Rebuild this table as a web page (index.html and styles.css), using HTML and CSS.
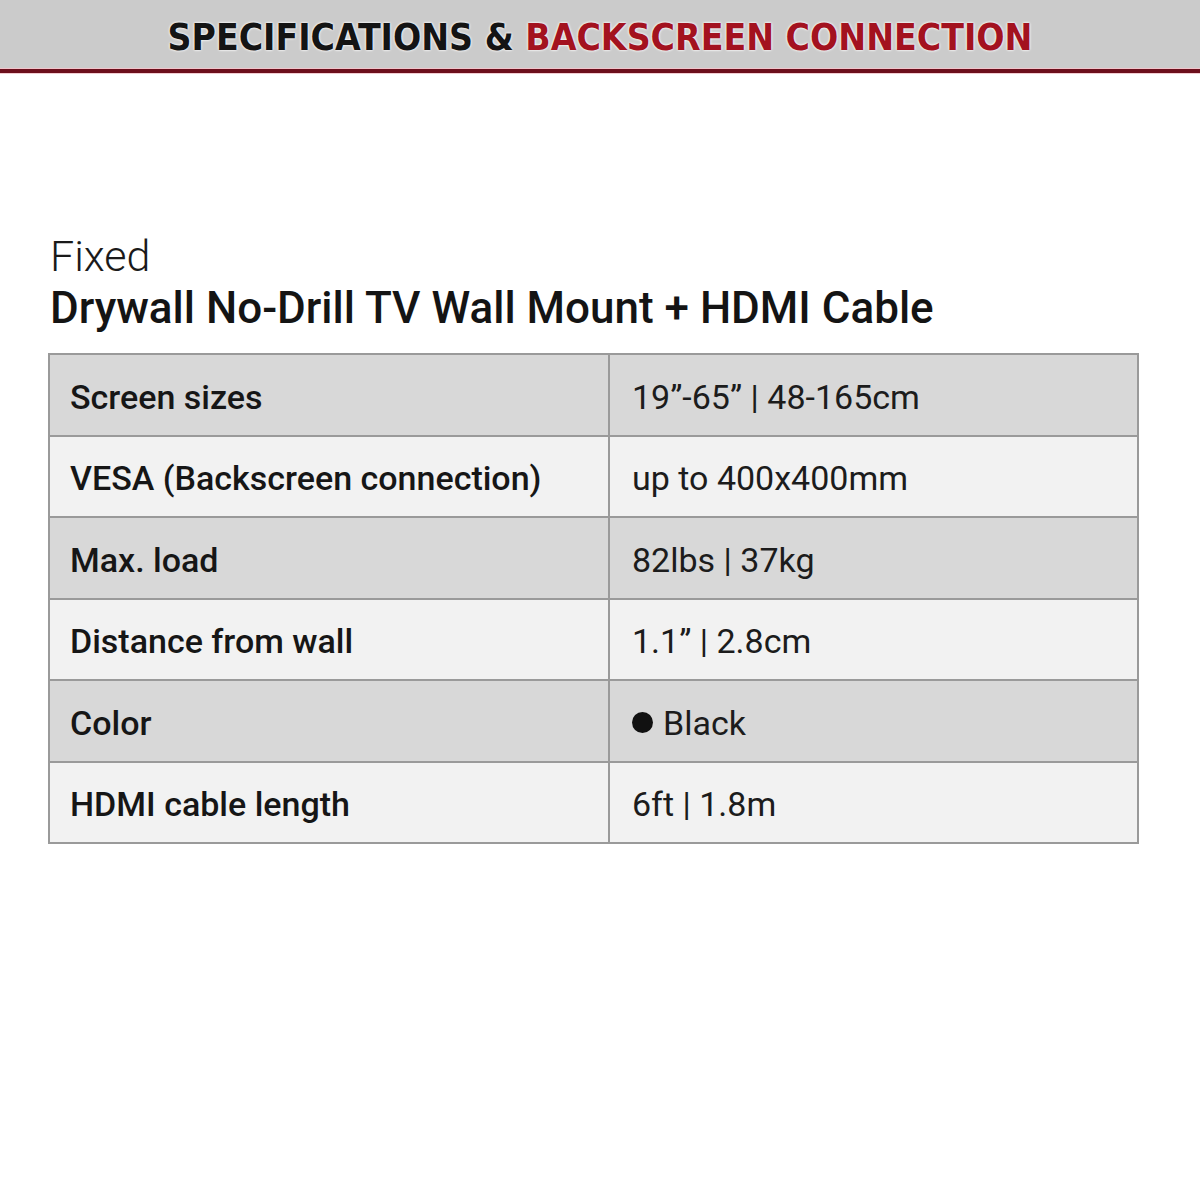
FILE: index.html
```html
<!DOCTYPE html>
<html>
<head>
<meta charset="utf-8">
<link rel="stylesheet" href="styles.css">
</head>
<body>
<header class="banner">
  <h1 class="banner-title"><span class="dark">SPECIFICATIONS &amp; </span><span class="red">BACKSCREEN CONNECTION</span></h1>
</header>
<div class="rule"></div>
<main class="content">
  <p class="kind">Fixed</p>
  <h2 class="product">Drywall No-Drill TV Wall Mount + HDMI Cable</h2>
  <table class="specs">
    <tr class="shade"><td class="label">Screen sizes</td><td class="value">19”-65” | 48-165cm</td></tr>
    <tr><td class="label">VESA (Backscreen connection)</td><td class="value">up to 400x400mm</td></tr>
    <tr class="shade"><td class="label">Max. load</td><td class="value">82lbs | 37kg</td></tr>
    <tr><td class="label">Distance from wall</td><td class="value">1.1” | 2.8cm</td></tr>
    <tr class="shade"><td class="label">Color</td><td class="value"><span class="dot"></span>Black</td></tr>
    <tr><td class="label">HDMI cable length</td><td class="value">6ft | 1.8m</td></tr>
  </table>
</main>
</body>
</html>
```
FILE: styles.css
```css
html, body {
  margin: 0;
  padding: 0;
  background: #ffffff;
  width: 1200px;
  height: 1200px;
  overflow: hidden;
}
body {
  font-family: "Roboto", "DejaVu Sans", sans-serif;
  color: #151515;
}
.banner {
  height: 68px;
  background: #cbcbcb;
  display: flex;
  justify-content: center;
  align-items: center;
}
.banner-title {
  margin: 0;
  font-family: "DejaVu Sans", sans-serif;
  font-stretch: condensed;
  font-weight: bold;
  font-size: 37px;
  letter-spacing: 0;
  padding-top: 7px;
  text-shadow: 0 0 3px #fff, 0 0 2px #fff;
}
.banner-title .dark { color: #141414; }
.banner-title .red { color: #a3121f; }
.rule {
  height: 4px;
  background: #6c0f1c;
  border-top: 1px solid #f2c4cb;
  border-bottom: 1px solid #f3cdd2;
}
.content {
  padding: 157px 0 0 50px;
}
.kind {
  margin: 0;
  font-size: 43px;
  font-weight: 300;
  line-height: 50px;
  color: #1a1a1a;
}
.product {
  margin: 2px 0 0 0;
  font-size: 44px;
  font-weight: 500;
  line-height: 50px;
  color: #141414;
}
.specs {
  margin: 20px 0 0 -2px;
  border-collapse: collapse;
  width: 1091px;
  border: 2px solid #a9a9a9;
}
.specs td {
  height: 75.5px;
  padding: 4px 0 0 20px;
  border: 2px solid #9a9a9a;
  font-size: 34px;
  vertical-align: middle;
  background: #f2f2f2;
}
.specs tr.shade td {
  background: #d8d8d8;
}
.specs td.label {
  width: 538px;
  font-weight: 500;
  color: #161616;
}
.specs td.value {
  padding-left: 22px;
  font-weight: 400;
  color: #1c1c1c;
}
.dot {
  display: inline-block;
  width: 21px;
  height: 21px;
  border-radius: 50%;
  background: #111;
  margin-right: 10px;
  vertical-align: 2px;
}
```
